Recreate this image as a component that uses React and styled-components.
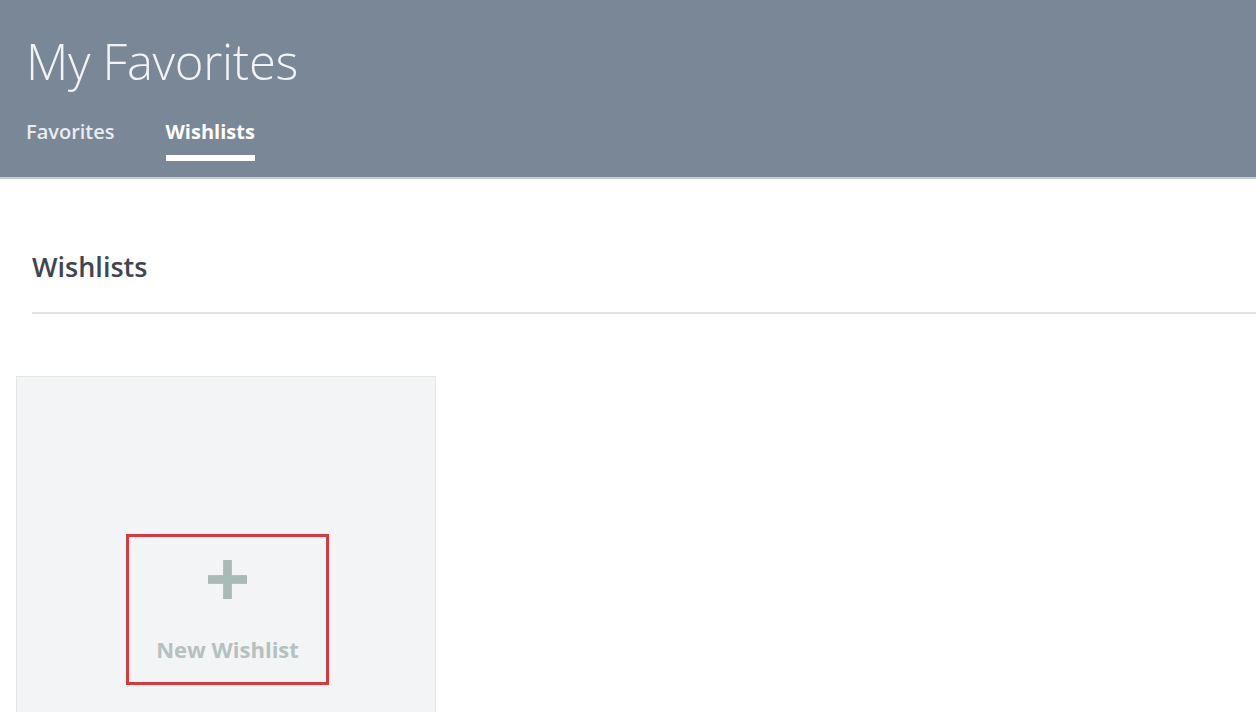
import React from "react";
import styled, { createGlobalStyle } from "styled-components";

const GlobalStyle = createGlobalStyle`
    html, body {
        margin: 0;
        padding: 0;
        overflow: hidden;
        background: #ffffff;
        font-family: "Open Sans", "Liberation Sans", sans-serif;
    }
`;

export default function App() {
    return <Page>
        <GlobalStyle />
        <Header>
            <Title>My Favorites</Title>
            <Tabs>
                <Tab>Favorites</Tab>
                <Tab active>Wishlists</Tab>
            </Tabs>
        </Header>

        <Main>
            <SectionHead>
                <Heading>Wishlists</Heading>
            </SectionHead>
            <Divider />

            <Grid>
                <Card>
                    <NewButton>
                        <PlusIcon viewBox="0 0 40 40">
                            <rect x="15.5" y="0" width="9" height="40" />
                            <rect x="0" y="15.5" width="40" height="9" />
                        </PlusIcon>
                        <NewLabel>New Wishlist</NewLabel>
                    </NewButton>
                </Card>
            </Grid>
        </Main>
    </Page>
}

const Page = styled.div`
    width: 100%;
    min-height: 100vh;
`;

const Header = styled.header`
    background: #7a8797;
    padding: 37px 26px 0;
    height: 140px;
    border-bottom: 2px solid #c4ccd2;
`;

const Title = styled.h1`
    margin: 0;
    font-size: 49px;
    line-height: 1;
    font-weight: 300;
    color: #f1f3f5;
    letter-spacing: -0.3px;
`;

const Tabs = styled.nav`
    display: flex;
    gap: 51px;
    margin-top: 36px;
`;

const Tab = styled.a`
    font-size: 20px;
    line-height: 1;
    padding-bottom: 13px;
    color: ${p => (p.active ? "#ffffff" : "#e9ecef")};
    font-weight: ${p => (p.active ? 700 : 600)};
    border-bottom: 6px solid ${p => (p.active ? "#ffffff" : "transparent")};
    cursor: pointer;
`;

const Main = styled.main`
    padding: 74px 0 0 16px;
`;

const SectionHead = styled.div`
    padding-left: 16px;
`;

const Heading = styled.h2`
    margin: 0;
    font-size: 27px;
    line-height: 1;
    font-weight: 600;
    color: #3f4652;
`;

const Divider = styled.hr`
    margin: 32px 0 0 16px;
    border: none;
    height: 2px;
    background: #e2e3e5;
`;

const Grid = styled.div`
    display: flex;
    margin-top: 62px;
`;

const Card = styled.div`
    width: 420px;
    height: 420px;
    background: #f3f4f5;
    border: 1px solid #e3e5e7;
    display: flex;
    flex-direction: column;
    align-items: center;
    padding: 157px 0 0 3px;
    box-sizing: border-box;
`;

const NewButton = styled.button`
    width: 203px;
    height: 151px;
    box-sizing: border-box;
    border: 3px solid #d6393e;
    background: transparent;
    display: flex;
    flex-direction: column;
    align-items: center;
    padding: 23px 0 0;
    font-family: inherit;
    cursor: pointer;
`;

const PlusIcon = styled.svg`
    width: 39px;
    height: 39px;
    fill: #a9bbb7;
`;

const NewLabel = styled.span`
    margin-top: 39px;
    font-size: 22px;
    line-height: 1;
    font-weight: 700;
    color: #b4c1bf;
`;
